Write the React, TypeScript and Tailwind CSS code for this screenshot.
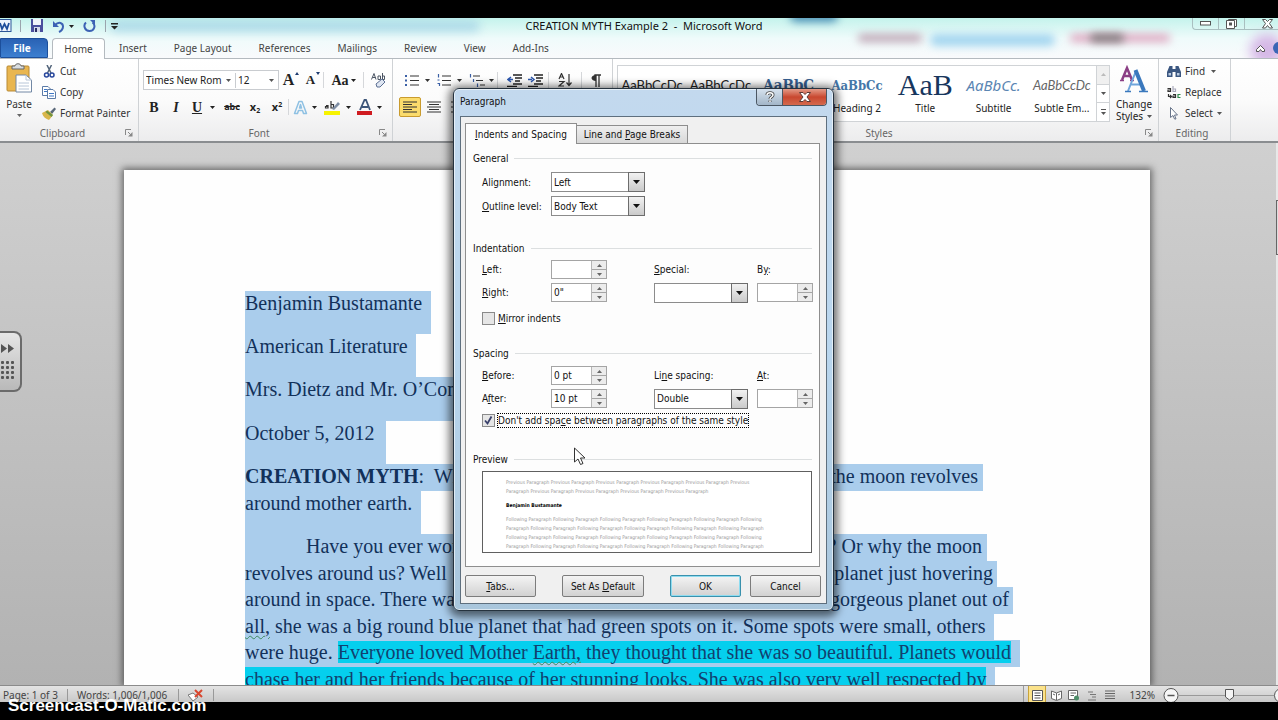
import type { ReactNode } from 'react';
import clsx from 'clsx';

/* ---------- shared bits ---------- */

function Caret({ className }: { className?: string }) {
  return (
    <svg className={clsx('shrink-0', className)} width="5" height="3" viewBox="0 0 5 3" fill="currentColor">
      <path d="M0 0H5L2.5 3Z" />
    </svg>
  );
}

function Divider() {
  return <span className="h-4 w-px shrink-0 bg-[#d5d7da]" />;
}

function Launcher() {
  return (
    <button type="button" aria-label="More options" className="text-[#888]">
      <svg width="8" height="8" viewBox="0 0 8 8" fill="none" stroke="currentColor">
        <path d="M0.5 6V0.5H6M3 3L6 6" />
        <path d="M7.5 3V7.5H3Z" fill="currentColor" stroke="none" />
      </svg>
    </button>
  );
}

function Tool({ label, className, children }: { label: string; className: string; children: ReactNode }) {
  return (
    <button type="button" aria-label={label} className={clsx('flex h-5 shrink-0 items-center justify-center', className)}>
      {children}
    </button>
  );
}

/* ---------- title bar ---------- */

function TitleBar() {
  return (
    <div className="relative flex h-5 items-start overflow-hidden">
      <div className="flex h-4 items-center gap-2 pl-0">
        <svg width="12" height="14" viewBox="0 0 12 14">
          <rect x="-3" y="0.5" width="14" height="12" fill="#eef5fd" stroke="#2b5797" />
          <path d="M0 4L2 10L4.500 5L7 10L9 4" fill="none" stroke="#1f4f9c" strokeWidth="1.800" />
        </svg>
        <span className="h-3 w-px bg-[#9aa4ad]" />
        <div className="flex items-center gap-1.5">
          <Tool label="Save" className="w-4">
            <svg width="14" height="14" viewBox="0 0 14 14">
              <path d="M1 0H13V13H1Z" fill="#4a4f9d" />
              <rect x="3" y="0" width="8" height="6" fill="#f1f3fa" />
              <rect x="4" y="8" width="6" height="5" fill="#d4d8ea" />
              <rect x="5" y="9" width="2" height="4" fill="#2b2f66" />
            </svg>
          </Tool>
          <Tool label="Undo" className="w-6 gap-1">
            <svg width="13" height="13" viewBox="0 0 13 13" fill="none" stroke="#3c62b4" strokeWidth="2">
              <path d="M3 5C7 1 11 3 11 6.500C11 9 9 11 7 12" />
              <path d="M1 1V7H7Z" fill="#3c62b4" stroke="none" />
            </svg>
            <Caret className="text-[#222]" />
          </Tool>
          <Tool label="Redo" className="w-4">
            <svg width="13" height="13" viewBox="0 0 13 13" fill="none" stroke="#3c62b4" strokeWidth="2">
              <path d="M3 2.500C0 5 1.500 11 6.500 11C11.500 11 13 5 9.500 2.500" />
              <path d="M7 0H12V5Z" fill="#3c62b4" stroke="none" />
            </svg>
          </Tool>
        </div>
        <div className="flex items-center gap-0.5">
          <span className="h-3 w-px bg-[#9aa4ad]" />
          <Tool label="Customize Quick Access Toolbar" className="w-3">
            <svg width="7" height="7" viewBox="0 0 7 7">
              <path d="M0 0H7V1.500H0ZM0 3H7L3.500 6.500Z" fill="#222" />
            </svg>
          </Tool>
        </div>
      </div>
      <h1 className="flex-1 pr-6 text-center text-[11px] leading-4 text-[#111]">
        CREATION MYTH Example 2 &nbsp;-&nbsp; Microsoft Word
      </h1>
      <div className="flex h-3 w-[86px] rounded-bl border-b border-l border-[#a9bfc0] text-[#555]">
        <button type="button" aria-label="Minimize" className="flex w-[26px] items-center justify-center border-r border-[#a9bfc0]">
          <svg width="11" height="5" viewBox="0 0 11 5" fill="#fff" stroke="currentColor">
            <rect x="0.500" y="0.500" width="10" height="3.500" />
          </svg>
        </button>
        <button type="button" aria-label="Restore" className="flex w-[26px] items-center justify-center border-r border-[#a9bfc0]">
          <svg width="11" height="10" viewBox="0 0 11 10" fill="#fff" stroke="currentColor">
            <path d="M2.500 0.500H10.500V7.500H2.500Z" />
            <path d="M0.500 1.500H8.500V9.500H0.500Z" />
            <rect x="3.500" y="4" width="2" height="2" />
          </svg>
        </button>
        <button type="button" aria-label="Close" className="flex flex-1 items-center justify-center pl-3">
          <svg width="11" height="10" viewBox="0 0 11 10" fill="#fff" stroke="currentColor">
            <path d="M0.500 0.500H3.500L5.500 2.500L7.500 0.500H10.500L7.500 4.500L10.500 9H7.500L5.500 6.500L3.500 9H0.500L3.500 4.500Z" />
          </svg>
        </button>
      </div>
    </div>
  );
}

const TABS = ['Insert', 'Page Layout', 'References', 'Mailings', 'Review', 'View', 'Add-Ins'];

function RibbonTabs() {
  return (
    <nav className="relative flex h-[21px] items-stretch border-b border-[#b4babf] text-[10px] text-[#444]">
      <button type="button" className="w-12 rounded-tr border border-[#1c4f9b] bg-linear-to-b from-[#2a62b4] to-[#3c7fd0] font-bold text-white">
        <span className="pr-1">File</span>
      </button>
      <button type="button" className="-mb-px ml-1 w-[53px] rounded-t border border-b-0 border-[#b4babf] bg-white">Home</button>
      <div className="flex items-center gap-[27px] pl-[14px]">
        {TABS.map((tab) => (
          <button key={tab} type="button">{tab}</button>
        ))}
      </div>
      <div className="ml-auto flex items-center gap-2">
        <button type="button" aria-label="Minimize the Ribbon">
          <svg width="9" height="7" viewBox="0 0 9 7" fill="#fff" stroke="#555">
            <path d="M0.500 4.500L4.500 0.500L8.500 4.500V6.500H6L4.500 4.500L3 6.500H0.500Z" />
          </svg>
        </button>
        <svg width="5" height="12" viewBox="0 0 5 12">
          <circle cx="6" cy="6" r="6" fill="#3b66b5" />
        </svg>
      </div>
    </nav>
  );
}

/* ---------- ribbon groups ---------- */

function Group({ title, className, launcher = true, children }: { title: string; className: string; launcher?: boolean; children: ReactNode }) {
  return (
    <section className={clsx('flex shrink-0 flex-col border-r border-[#cfd2d5]', className)}>
      <div className="h-[66px]">{children}</div>
      <div className="flex h-4 items-center pr-[5px] text-[#666]">
        <span className="flex-1 text-center">{title}</span>
        {launcher && <Launcher />}
      </div>
    </section>
  );
}

function Clipboard() {
  return (
    <Group title="Clipboard" className="w-[139px]">
      <div className="flex">
        <button type="button" className="flex w-[38px] flex-col items-center pt-1">
          <svg width="27" height="30" viewBox="0 0 27 30">
            <rect x="1" y="3" width="22" height="25" rx="1" fill="#e9b650" stroke="#b98a34" />
            <path d="M6 6V3H9C9 0 15 0 15 3H18V6Z" fill="#d9dde0" stroke="#666" />
            <path d="M10 12H20L25.500 17V29H10Z" fill="#fff" stroke="#7288a5" />
            <path d="M20 12V17H25.500M12.500 20H23M12.500 23H23M12.500 26H23" fill="none" stroke="#b8c6d8" />
          </svg>
          <span className="pt-1 leading-[15px]">Paste</span>
          <Caret className="mt-0.5 text-[#666]" />
        </button>
        <div className="flex flex-col pl-1">
          <button type="button" className="flex h-[21px] items-center gap-1 pt-1">
            <svg width="14" height="13" viewBox="0 0 14 13" fill="none">
              <path d="M5 0L9 8M9.500 0L5.500 8" stroke="#52647a" strokeWidth="1.500" />
              <circle cx="4.500" cy="10" r="2" stroke="#27469c" strokeWidth="1.500" />
              <circle cx="10" cy="10" r="2" stroke="#27469c" strokeWidth="1.500" />
            </svg>
            Cut
          </button>
          <button type="button" className="flex h-[21px] items-center gap-1 pt-1">
            <svg width="14" height="13" viewBox="0 0 14 13" fill="#fff" stroke="#5c7ba6">
              <path d="M0.500 0.500H6L8.500 3V9.500H0.500Z" />
              <path d="M5.500 3.500H11L13.500 6V12.500H5.500Z" />
              <path d="M2 3.500H5M2 5.500H5M7 7.500H12M7 10H12" stroke="#3f77c5" />
            </svg>
            Copy
          </button>
          <button type="button" className="flex h-[21px] items-center gap-1 whitespace-nowrap pt-1">
            <svg width="14" height="13" viewBox="0 0 14 13">
              <path d="M8 5L12.500 0.500L14 2L10 7Z" fill="#596778" />
              <path d="M0 6L6 3L11 8L7 13C4 12 1 10 0 6Z" fill="#d8b64a" />
              <path d="M5 3.500L11 8L9.500 10L3.500 5Z" fill="#6f9440" />
            </svg>
            Format Painter
          </button>
        </div>
      </div>
    </Group>
  );
}

function FontGroup() {
  return (
    <Group title="Font" className="w-[254px]">
      <div className="flex h-8 items-center pl-1 pt-2.5 text-[#222]">
        <div className="flex h-5 items-center border border-[#c9ccd0] bg-white">
          <input aria-label="Font" defaultValue="Times New Rom" className="w-[82px] pl-0.5 outline-none" />
          <Caret className="mr-1 text-[#555]" />
          <input aria-label="Font size" defaultValue="12" className="w-[34px] border-l border-[#c9ccd0] pl-0.5 outline-none" />
          <Caret className="mr-1 text-[#555]" />
        </div>
        <Tool label="Grow Font" className="w-6 gap-px">
          <span className="font-['Liberation_Serif',serif] text-[16px] font-bold">A</span>
          <svg className="self-start" width="4" height="8" viewBox="0 0 4 8"><path d="M0 5L2 2L4 5Z" fill="#1f3c70" /></svg>
        </Tool>
        <Tool label="Shrink Font" className="w-5 gap-px">
          <span className="font-['Liberation_Serif',serif] text-[13px] font-bold">A</span>
          <svg className="self-start" width="4" height="8" viewBox="0 0 4 8"><path d="M0 2H4L2 5Z" fill="#1f3c70" /></svg>
        </Tool>
        <Divider />
        <Tool label="Change Case" className="w-[39px] gap-0.5">
          <span className="font-['Liberation_Serif',serif] text-[14px] font-bold">Aa</span>
          <Caret />
        </Tool>
        <Divider />
        <Tool label="Clear Formatting" className="w-7">
          <svg width="16" height="16" viewBox="0 0 16 16" fill="none" stroke="#4b5563">
            <path d="M1.500 7.500L4 1.500L6 7.500M2.500 5.500H5.500M8 4V7.500H10.500V4H8M12.500 1V7.500H14.500V4H12.500" />
            <path d="M6 12L12 7L15 10L10 15H7Z" fill="#dfe6f2" stroke="#5b6f92" />
          </svg>
        </Tool>
      </div>
      <div className="flex h-8 items-center pl-1 text-[#222]">
        <Tool label="Bold" className="w-[22px]"><span className="font-['Liberation_Serif',serif] text-[14px] font-bold">B</span></Tool>
        <Tool label="Italic" className="w-[22px]"><span className="font-['Liberation_Serif',serif] text-[14px] font-bold italic">I</span></Tool>
        <Tool label="Underline" className="w-[33px] gap-2">
          <span className="font-['Liberation_Serif',serif] text-[14px] font-bold underline">U</span>
          <Caret />
        </Tool>
        <Tool label="Strikethrough" className="w-6"><span className="text-[9px] font-bold line-through">abc</span></Tool>
        <Tool label="Subscript" className="w-[22px]"><span className="text-[11px] font-bold">x<sub className="text-[7px]">2</sub></span></Tool>
        <Tool label="Superscript" className="w-[22px]"><span className="text-[11px] font-bold">x<sup className="text-[7px]">2</sup></span></Tool>
        <Divider />
        <Tool label="Text Effects" className="w-8 gap-1">
          <svg width="15" height="15" viewBox="0 0 15 15" fill="none" strokeLinejoin="round">
            <path d="M1.500 13.500L6 1.500H9L13.500 13.500H10.500L9.500 10.500H5.500L4.500 13.500ZM6.500 8H8.500L7.500 4.500Z" stroke="#8fc1e3" strokeWidth="1.500" />
          </svg>
          <Caret />
        </Tool>
        <Tool label="Text Highlight Color" className="w-8 gap-[5px]">
          <svg width="17" height="16" viewBox="0 0 17 16">
            <path d="M2 6.500H4V9H1.500V7.500H4M7 2V9H9.500V5.500H7" fill="none" stroke="#333" strokeWidth="1.200" />
            <path d="M8 10L14 3L16 5L10 11Z" fill="#7d8da3" />
            <rect y="12" width="16" height="4" fill="#f7f300" />
          </svg>
          <Caret />
        </Tool>
        <Tool label="Font Color" className="w-8 gap-1">
          <svg width="16" height="16" viewBox="0 0 16 16">
            <path d="M3 11L7.500 1H9L13 11M5 8H11" fill="none" stroke="#3d5578" strokeWidth="1.800" />
            <rect y="12" width="15" height="4" fill="#cf1b20" />
          </svg>
          <Caret />
        </Tool>
      </div>
    </Group>
  );
}

function ParagraphGroup() {
  return (
    <Group title="Paragraph" className="w-[220px]">
      <div className="flex h-8 items-center pl-2 pt-2.5 text-[#333]">
        <Tool label="Bullets" className="w-8 gap-1.5">
          <svg width="14" height="13" viewBox="0 0 14 13" stroke="#333" strokeWidth="1.200">
            <path d="M5 2H14M5 6.500H14M5 11H14" />
            <path d="M0 2H2M0 6.500H2M0 11H2" stroke="#3a5fa5" strokeWidth="2" />
          </svg>
          <Caret />
        </Tool>
        <Tool label="Numbering" className="w-8 gap-1.5">
          <svg width="14" height="13" viewBox="0 0 14 13" stroke="#333" strokeWidth="1.200">
            <path d="M5 2H14M5 6.500H14M5 11H14" />
            <path d="M1.500 0V3.500M0.500 6H2.500M0.500 9.500H2.500V12" stroke="#3a5fa5" fill="none" />
          </svg>
          <Caret />
        </Tool>
        <Tool label="Multilevel List" className="w-8 gap-1">
          <svg width="16" height="13" viewBox="0 0 16 13" stroke="#333" strokeWidth="1.200">
            <path d="M4 2H11M7 6.500H14M11 11H16" />
            <path d="M1.500 0V3.500M4.500 5V8M8.500 9.500V13" stroke="#3a5fa5" />
          </svg>
          <Caret />
        </Tool>
        <Divider />
        <Tool label="Decrease Indent" className="w-[25px] pl-2">
          <svg width="15" height="13" viewBox="0 0 15 13" stroke="#222" strokeWidth="1.500">
            <path d="M6 1H15M8 4H15M8 7H13M6 10H15M0 12.500H10" />
            <path d="M6 5.500H2M4 3L1 5.500L4 8" fill="none" stroke="#2c57ad" />
          </svg>
        </Tool>
        <Tool label="Increase Indent" className="w-[25px]">
          <svg width="15" height="13" viewBox="0 0 15 13" stroke="#222" strokeWidth="1.500">
            <path d="M6 1H15M8 4H15M8 7H13M6 10H15M0 12.500H10" />
            <path d="M0 5.500H4M3 3L6 5.500L3 8" fill="none" stroke="#2c57ad" />
          </svg>
        </Tool>
        <Divider />
        <Tool label="Sort" className="w-8">
          <svg width="14" height="14" viewBox="0 0 14 14" fill="none" stroke="#333" strokeWidth="1.200">
            <path d="M1 6L3.500 0.500L6 6M2 4H5M1 8.500H6L1 13H6M11 1V12M8.500 9.500L11 12.500L13.500 9.500" />
          </svg>
        </Tool>
        <Divider />
        <Tool label="Show Paragraph Marks" className="w-7">
          <svg width="10" height="13" viewBox="0 0 10 13" fill="none" stroke="#333" strokeWidth="1.300">
            <path d="M10 1H4V6M5 1V13M8 1V13" />
            <path d="M5 1C-1 1 -1 7 5 7Z" fill="#333" stroke="none" />
          </svg>
        </Tool>
      </div>
      <div className="flex h-8 items-center gap-0.5 pl-1.5">
        <Tool label="Align Left" className="w-[22px] rounded-xs border border-[#c99b2e] bg-[#fbdc6c]">
          <svg width="14" height="13" viewBox="0 0 14 13" stroke="#333" strokeWidth="1.200">
            <path d="M0 1H14M0 3.500H9M0 6H14M0 8.500H9M0 11H14" />
          </svg>
        </Tool>
        <Tool label="Center" className="w-[22px]">
          <svg width="14" height="13" viewBox="0 0 14 13" stroke="#333" strokeWidth="1.200">
            <path d="M0 1H14M2 3.500H12M0 6H14M2 8.500H12M0 11H14" />
          </svg>
        </Tool>
        <Tool label="Align Right" className="w-[22px]">
          <svg width="14" height="13" viewBox="0 0 14 13" stroke="#333" strokeWidth="1.200">
            <path d="M0 1H14M5 3.500H14M0 6H14M5 8.500H14M0 11H14" />
          </svg>
        </Tool>
      </div>
    </Group>
  );
}

const STYLES = [
  { name: 'Normal', sample: 'AaBbCcDc', look: "font-['Lato',sans-serif] text-[13px] text-[#222]" },
  { name: 'No Spacing', sample: 'AaBbCcDc', look: "font-['Lato',sans-serif] text-[13px] text-[#222]" },
  { name: 'Heading 1', sample: 'AaBbC', look: "font-['DejaVu_Serif_Condensed','DejaVu_Serif',serif] text-[15px] font-bold text-[#365f91]" },
  { name: 'Heading 2', sample: 'AaBbCc', look: "font-['DejaVu_Serif_Condensed','DejaVu_Serif',serif] text-[13px] font-bold text-[#4577a8]" },
  { name: 'Title', sample: 'AaB', look: "font-['Liberation_Serif',serif] text-[30px] text-[#17365d]" },
  { name: 'Subtitle', sample: 'AaBbCc.', look: "font-['Noto_Sans',sans-serif] text-[15px] italic text-[#5b86b3]" },
  { name: 'Subtle Em...', sample: 'AaBbCcDc', look: "font-['Lato',sans-serif] text-[13px] italic text-[#666]" },
];

function StylesGroup() {
  return (
    <Group title="Styles" className="min-w-0 flex-1">
      <div className="flex pl-1 pt-1.5 text-[#222]">
        <div className="flex h-[57px] min-w-0 flex-1 border border-[#d0d3d6] bg-white">
          <div className="grid min-w-0 flex-1 grid-cols-7">
            {STYLES.map((s) => (
              <button key={s.name} type="button" className="flex min-w-0 flex-col items-center overflow-hidden whitespace-nowrap">
                <span className={clsx('flex h-[34px] items-center pt-1 leading-none', s.look)}>{s.sample}</span>
                <span className="leading-4">{s.name}</span>
              </button>
            ))}
          </div>
          <div className="flex w-[13px] flex-col border-l border-[#d0d3d6] text-[#555]">
            <button type="button" aria-label="Previous styles" className="flex flex-1 items-center justify-center bg-[#f0f0f0] text-[#bbb]"><Caret className="rotate-180" /></button>
            <button type="button" aria-label="Next styles" className="flex flex-1 items-center justify-center border-y border-[#d0d3d6]"><Caret /></button>
            <button type="button" aria-label="More styles" className="flex flex-1 flex-col items-center justify-center gap-0.5">
              <span className="h-px w-[5px] bg-[#555]" />
              <Caret />
            </button>
          </div>
        </div>
        <button type="button" className="flex w-12 flex-col items-center">
          <svg width="28" height="29" viewBox="0 0 28 29" fill="none">
            <path d="M2 15L7 3L12 15M4 11H10" stroke="#8b3f85" strokeWidth="2.500" />
            <path d="M0 15.500H4M10 15.500H14" stroke="#8b3f85" strokeWidth="1.500" />
            <path d="M8 26L16 6M10.500 19.500H20" stroke="#6fa5db" strokeWidth="2" />
            <path d="M15.500 5L24 26" stroke="#3a78bd" strokeWidth="4" />
            <path d="M5 26.500H11M19 26.500H28" stroke="#3a78bd" strokeWidth="1.500" />
          </svg>
          <span className="pt-1 leading-3">Change</span>
          <span className="flex items-center gap-1 leading-3">Styles <Caret className="text-[#555]" /></span>
        </button>
      </div>
    </Group>
  );
}

function EditingGroup() {
  return (
    <Group title="Editing" className="w-[72px]" launcher={false}>
      <div className="flex flex-col items-start pl-2">
        <button type="button" className="flex h-[21px] items-center gap-1 pt-1">
          <svg width="14" height="13" viewBox="0 0 14 13">
            <path d="M0 12V7L2.500 1H5.500V4H8.500V1H11.500L14 7V12H8.500V7H5.500V12Z" fill="#3a5680" />
            <path d="M1.500 8H4V10.500H1.500ZM10 8H12.500V10.500H10Z" fill="#b9cbe2" />
          </svg>
          Find <Caret className="ml-0.5 text-[#555]" />
        </button>
        <button type="button" className="flex h-[21px] items-center gap-1 pt-1">
          <svg width="14" height="13" viewBox="0 0 14 13" fill="none" stroke="#333" strokeWidth="1.200">
            <path d="M0.500 2.500H3.500V5.500H1V4H3.500M1.500 8V10.500H4M3 9L4.500 10.500L3 12M6 8.500H8.500V11.500H6V10H8.500" />
            <path d="M6 0V5.500H8.500V3H6" stroke="#aab" />
            <path d="M13.500 8.500H11V11.500H13.500" stroke="#2f8a4b" />
          </svg>
          Replace
        </button>
        <button type="button" className="flex h-[21px] items-center gap-1 pt-1">
          <svg width="14" height="13" viewBox="0 0 14 13" fill="#fff" stroke="#68758a">
            <path d="M3.500 0.500V10.500L6 8.500L7.500 12H9L7.500 8H10.500Z" />
          </svg>
          Select <Caret className="text-[#555]" />
        </button>
      </div>
    </Group>
  );
}

/* ---------- document ---------- */

const squiggle = 'underline decoration-[#3c8a5c] decoration-wavy decoration-1 underline-offset-2';

function Line({ end, className, children }: { end: string; className?: string; children: ReactNode }) {
  return (
    <div className={clsx('flex justify-between whitespace-pre bg-[#aacdec]', end, className)}>{children}</div>
  );
}

function DocumentPage() {
  return (
    <article className="h-full w-[1026px] shrink-0 bg-[#fefefe] px-[121px] pt-[121px] font-['Liberation_Serif',serif] text-[20px] leading-6 text-[#12315a] shadow-[0_0_7px_2px_rgba(0,0,0,0.5)]">
      <Line end="w-[186px]" className="h-[43px]">Benjamin Bustamante</Line>
      <Line end="w-[171px]" className="h-[43px]">American Literature</Line>
      <Line end="w-[260px]" className="h-11">Mrs. Dietz and Mr. O’Connor</Line>
      <Line end="w-[141px]" className="h-[43px]">October 5, 2012</Line>
      <Line end="w-[738px]" className="h-[27px] pr-[5px]">
        <span><strong>CREATION MYTH</strong>:  Why</span>
        <span>the moon revolves</span>
      </Line>
      <Line end="w-[176px]" className="h-[43px]">around mother earth.</Line>
      <div className="[&>*:nth-child(even)]:h-[26px] [&>*:nth-child(odd)]:h-[27px]">
        <Line end="w-[742px]" className="pl-[61px] pr-[5px]">
          <span>Have you ever wond</span>
          <span>? Or why the moon</span>
        </Line>
        <Line end="w-[752px]" className="pr-1">
          <span>revolves around us? Well</span>
          <span>planet just hovering</span>
        </Line>
        <Line end="w-[768px]" className="pr-1">
          <span>around in space. There was</span>
          <span>gorgeous planet out of</span>
        </Line>
        <Line end="w-[749px]">
          <span><span className={squiggle}>all,</span> she was a big round blue planet that had green spots on it. Some spots were small, others</span>
        </Line>
        <Line end="w-[775px]">
          <span>were huge. <mark className="bg-[#05cfee] text-[#12416f]">Everyone loved Mother <span className={squiggle}>Earth,</span> they thought that she was so beautiful. Planets would</mark></span>
        </Line>
        <Line end="w-[750px]">
          <mark className="bg-[#05cfee] text-[#12416f]">chase her and her friends because of her stunning looks. She was also very well respected by</mark>
        </Line>
      </div>
    </article>
  );
}

function SideHandle() {
  return (
    <button type="button" aria-label="Open side panel" className="absolute left-0 top-[188px] flex h-[61px] w-[22px] flex-col items-start justify-center gap-2 rounded-r-lg border-2 border-l-0 border-[#6b6b6b] bg-linear-to-b from-[#e6e6e6] to-[#b9b9b9]">
      <svg width="14" height="9" viewBox="0 0 14 9" fill="#555">
        <path d="M1 0L7 4.500L1 9ZM8 0L14 4.500L8 9Z" />
      </svg>
      <svg width="14" height="18" viewBox="0 0 14 18" fill="#555">
        {[0, 5, 10, 15].map((y) => [1, 6, 11].map((x) => <rect key={`${x}-${y}`} x={x} y={y} width="3" height="3" rx="1" />))}
      </svg>
    </button>
  );
}

/* ---------- status bar ---------- */

function StatusBar() {
  return (
    <footer className="flex h-[17px] shrink-0 items-center overflow-hidden border-t border-[#8b8b8b] bg-linear-to-b from-[#e4e4e4] to-[#c8c8c8] pl-[3px] pt-0.5 text-[10px] text-[#444]">
      <span className="w-[65px] border-r border-[#999] leading-3">Page: 1 of 3</span>
      <span className="w-[111px] border-r border-[#999] pl-[9px] leading-3">Words: 1,006/1,006</span>
      <span className="flex w-[35px] justify-center border-r border-[#999]">
        <svg width="16" height="12" viewBox="0 0 16 12">
          <path d="M0 6L5 4L10 8L5 12Z" fill="#fff" stroke="#777" />
          <path d="M7 1L14 8M14 1L7 8" stroke="#d9472f" strokeWidth="2" />
        </svg>
      </span>
      <div className="ml-auto flex items-center">
        <div className="flex items-center gap-0.5 border-l border-[#999] pl-1">
          <Tool label="Print Layout" className="h-4 w-[18px] border border-[#c9a43a] bg-[#fbe28a]">
            <svg width="11" height="11" viewBox="0 0 11 11" fill="#fff" stroke="#555"><path d="M0.500 0.500H10.500V10.500H0.500ZM2.500 3H8.500M2.500 5.500H8.500M2.500 8H8.500" /></svg>
          </Tool>
          <Tool label="Full Screen Reading" className="h-4 w-4">
            <svg width="11" height="11" viewBox="0 0 11 11" fill="#fff" stroke="#666"><path d="M0.500 1L5.500 3L10.500 1V8.500L5.500 10.500L0.500 8.500ZM5.500 3V10M2 4L4 5M7 5L9 4" /></svg>
          </Tool>
          <Tool label="Web Layout" className="h-4 w-4">
            <svg width="12" height="11" viewBox="0 0 12 11" fill="#fff" stroke="#666"><path d="M0.500 0.500H9.500V9.500H0.500ZM2.500 3H8M2.500 5.500H6" /><circle cx="8.500" cy="8" r="2.500" fill="#4d8d68" stroke="none" /></svg>
          </Tool>
          <Tool label="Outline" className="h-4 w-4">
            <svg width="10" height="11" viewBox="0 0 10 11" fill="none" stroke="#777"><path d="M1 2H6M3 4.500H9M5 7H9M1 10H9" /></svg>
          </Tool>
          <Tool label="Draft" className="h-4 w-4">
            <svg width="10" height="10" viewBox="0 0 10 10" fill="none" stroke="#666"><path d="M0 1H10M0 3.500H10M0 6H10M0 8.500H10" /></svg>
          </Tool>
        </div>
        <span className="w-[45px] pr-2 text-right leading-3">132%</span>
        <button type="button" aria-label="Zoom out">
          <svg width="16" height="15" viewBox="0 0 16 15" fill="#f6f6f6" stroke="#555"><circle cx="8" cy="7.500" r="7" /><path d="M4.500 7.500H11.500" strokeWidth="1.500" /></svg>
        </button>
        <div className="flex h-4 w-[95px] items-center">
          <span className="h-px w-[46px] bg-[#999]" />
          <svg width="9" height="12" viewBox="0 0 9 12" fill="#f4f4f4" stroke="#555"><path d="M0.500 0.500H8.500V8L4.500 11L0.500 8Z" /></svg>
          <span className="h-px flex-1 bg-[#999]" />
        </div>
        <svg width="4" height="15" viewBox="0 0 4 15" fill="#f6f6f6" stroke="#555"><circle cx="7.500" cy="7.500" r="7" /></svg>
      </div>
    </footer>
  );
}

/* ---------- paragraph dialog ---------- */

// Underlines the access key inside a label
function Key({ text }: { text: string }) {
  const [before, key, after] = text.split('|');
  return <>{before}<span className="underline underline-offset-1">{key}</span>{after}</>;
}

function Heading({ children, className }: { children: ReactNode; className?: string }) {
  return (
    <h2 className={clsx('flex h-4 items-center gap-1.5', className)}>
      {children}
      <span className="h-px flex-1 bg-[#dcdfe0]" />
    </h2>
  );
}

function Select({ id, value }: { id: string; value: string }) {
  return (
    <div className="relative h-5 w-[94px] border border-[#8c8c8c] bg-white">
      <select id={id} className="block h-full w-full appearance-none bg-transparent pl-0.5 pr-4 outline-none">
        <option>{value}</option>
      </select>
      <span className="pointer-events-none absolute -right-px -top-px flex h-5 w-[17px] items-center justify-center border border-[#6d6d6d] bg-linear-to-b from-[#f2f2f2] to-[#cacaca]">
        <svg width="7" height="4" viewBox="0 0 7 4"><path d="M0 0H7L3.500 4Z" fill="#111" /></svg>
      </span>
    </div>
  );
}

function Spinner({ id, value, label }: { id: string; value: string; label: string }) {
  return (
    <div className="flex h-[19px] w-14 border border-[#a5a5a5] bg-white">
      <input id={id} defaultValue={value} className="w-10 min-w-0 flex-1 pl-0.5 outline-none" />
      <div className="flex w-[15px] flex-col border-l border-[#b5b5b5] bg-[#ececec] text-[#666]">
        <button type="button" aria-label={`Increase ${label}`} className="flex flex-1 items-center justify-center border-b border-[#a5a5a5]"><Caret className="rotate-180" /></button>
        <button type="button" aria-label={`Decrease ${label}`} className="flex flex-1 items-center justify-center"><Caret /></button>
      </div>
    </div>
  );
}

const row = 'grid grid-cols-[69px_103px_103px_55px] items-center pl-[9px]';
const dialogButton = 'h-[22px] rounded-xs border bg-linear-to-b from-[#f4f4f4] to-[#d2d2d2]';

function Preview() {
  return (
    <div className="ml-[9px] mt-1 h-[82px] overflow-hidden whitespace-nowrap border border-[#5f5f5f] bg-white pl-[23px] pt-1.5 text-[5px] leading-[9px] text-[#9a9a9a]">
      <p>Previous Paragraph Previous Paragraph Previous Paragraph Previous Paragraph Previous Paragraph Previous</p>
      <p>Paragraph Previous Paragraph Previous Paragraph Previous Paragraph Previous Paragraph</p>
      <p className="my-[5px] font-bold text-black">Benjamin Bustamante</p>
      <p>Following Paragraph Following Paragraph Following Paragraph Following Paragraph Following Paragraph Following</p>
      <p>Paragraph Following Paragraph Following Paragraph Following Paragraph Following Paragraph Following Paragraph</p>
      <p>Following Paragraph Following Paragraph Following Paragraph Following Paragraph Following Paragraph Following</p>
      <p>Paragraph Following Paragraph Following Paragraph Following Paragraph Following Paragraph Following Paragraph</p>
    </div>
  );
}

function ParagraphDialog() {
  return (
    <div
      role="dialog"
      aria-label="Paragraph"
      className="absolute left-[453px] top-[88px] w-[381px] rounded-md border border-[#26333f] bg-linear-to-b from-[#c3d9ee] via-[#b9d6ee] to-[#a9c6dc] px-1.5 pb-1.5 font-['DejaVu_Sans_Condensed','DejaVu_Sans',sans-serif] text-[10px] text-[#111] shadow-[0_2px_9px_4px_rgba(0,0,0,0.55),inset_0_0_0_1px_rgba(255,255,255,0.6)]"
    >
      <div className="flex h-[27px] items-start justify-between">
        <span className="pt-1 leading-[18px]">Paragraph</span>
        <div className="flex h-[17px] overflow-hidden rounded-b border border-t-0 border-[#4b5763]">
          <button type="button" aria-label="Help" className="flex w-[26px] items-center justify-center border-r border-[#4b5763] bg-linear-to-b from-[#d6e2ee] to-[#a3b6c8]">
            <svg width="10" height="12" viewBox="0 0 10 12" fill="none">
              <path d="M2 4C2 1 8 1 8 4C8 6 5 6 5 8M5 9.500V11" stroke="#444" strokeWidth="3" />
              <path d="M2 4C2 1 8 1 8 4C8 6 5 6 5 8M5 9.500V11" stroke="#fff" strokeWidth="1.500" />
            </svg>
          </button>
          <button type="button" aria-label="Close" className="flex w-[43px] items-center justify-center bg-linear-to-b from-[#e29a88] via-[#c8472f] to-[#d4694d]">
            <svg width="12" height="10" viewBox="0 0 12 10" fill="#fff" stroke="#5b3a35">
              <path d="M0.500 0.500H4L6 2.500L8 0.500H11.500L8 5L11.500 9.500H8L6 7.500L4 9.500H0.500L4 5Z" />
            </svg>
          </button>
        </div>
      </div>

      <div className="border border-[#5e6f7e] bg-[#f0f0f0] px-1 pb-1.5 pt-1.5">
        <div role="tablist" className="flex items-end">
          <button type="button" role="tab" aria-selected="true" className="relative -mb-px h-[21px] w-28 border border-b-0 border-[#8e8e8e] bg-[#fdfdfd]">
            <Key text="|I|ndents and Spacing" />
          </button>
          <button type="button" role="tab" aria-selected="false" className="h-[18px] w-[111px] border border-b-0 border-l-0 border-[#8e8e8e] bg-linear-to-b from-[#efefef] to-[#d8d8d8]">
            <Key text="Line and |P|age Breaks" />
          </button>
        </div>

        <div role="tabpanel" className="h-[424px] w-[355px] border border-[#8e8e8e] bg-[#fdfdfd] pl-[7px] pr-[7px] pt-1.5">
          <Heading>General</Heading>
          <div className={clsx(row, 'mt-1 h-6')}>
            <label htmlFor="alignment"><Key text="Ali|g|nment:" /></label>
            <Select id="alignment" value="Left" />
          </div>
          <div className={clsx(row, 'h-6')}>
            <label htmlFor="outline"><Key text="|O|utline level:" /></label>
            <Select id="outline" value="Body Text" />
          </div>

          <Heading className="mt-[22px]">Indentation</Heading>
          <div className={clsx(row, 'mt-0.5 h-[23px]')}>
            <label htmlFor="left"><Key text="|L|eft:" /></label>
            <Spinner id="left" value="" label="left indent" />
            <label htmlFor="special"><Key text="|S|pecial:" /></label>
            <label htmlFor="by"><Key text="B|y|:" /></label>
          </div>
          <div className={clsx(row, 'h-[23px]')}>
            <label htmlFor="right"><Key text="|R|ight:" /></label>
            <Spinner id="right" value={'0"'} label="right indent" />
            <Select id="special" value="" />
            <Spinner id="by" value="" label="special indent" />
          </div>
          <label className="mt-1 flex h-5 items-center gap-[3px] pl-[9px]">
            <input type="checkbox" className="h-[13px] w-[13px] appearance-none border border-[#8a8a8a] bg-[#e6e6e6]" />
            <span><Key text="|M|irror indents" /></span>
          </label>

          <Heading className="mt-[17px]">Spacing</Heading>
          <div className={clsx(row, 'mt-[3px] h-[23px]')}>
            <label htmlFor="before"><Key text="|B|efore:" /></label>
            <Spinner id="before" value="0 pt" label="space before" />
            <label htmlFor="line"><Key text="Li|n|e spacing:" /></label>
            <label htmlFor="at"><Key text="|A|t:" /></label>
          </div>
          <div className={clsx(row, 'h-[23px]')}>
            <label htmlFor="after"><Key text="A|f|ter:" /></label>
            <Spinner id="after" value="10 pt" label="space after" />
            <Select id="line" value="Double" />
            <Spinner id="at" value="" label="line spacing" />
          </div>
          <label className="flex h-5 items-center gap-0.5 pl-[9px]">
            <span className="relative flex h-[13px] w-[13px] shrink-0">
              <input type="checkbox" defaultChecked className="h-[13px] w-[13px] appearance-none border border-[#8a8a8a] bg-[#e6e6e6]" />
              <svg className="pointer-events-none absolute left-0 top-0" width="13" height="13" viewBox="0 0 13 13" fill="none" stroke="#39406b" strokeWidth="1.800">
                <path d="M3 6.500L5.500 9.500L9.500 2.500" />
              </svg>
            </span>
            <span className="whitespace-nowrap border border-dotted border-black leading-[13px]"><Key text="Don't add spa|c|e between paragraphs of the same style" /></span>
          </label>

          <Heading className="mt-[21px]">Preview</Heading>
          <Preview />
        </div>

        <div className="flex pt-2">
          <button type="button" className={clsx(dialogButton, 'w-[71px] border-[#7c7c7c]')}><Key text="|T|abs..." /></button>
          <button type="button" className={clsx(dialogButton, 'ml-[26px] w-[82px] border-[#7c7c7c]')}><Key text="Set As |D|efault" /></button>
          <button type="button" className={clsx(dialogButton, 'ml-[26px] w-[71px] border-[#3a91ad] shadow-[inset_0_0_0_1px_#8edcf0]')}>OK</button>
          <button type="button" className={clsx(dialogButton, 'ml-[9px] w-[71px] border-[#7c7c7c]')}>Cancel</button>
        </div>
      </div>
    </div>
  );
}

export default function App() {
  return (
    <div className="relative flex h-screen flex-col overflow-hidden bg-black pb-[18px] pt-[18px] font-['Noto_Sans','Open_Sans',sans-serif]">
      <header className="relative shrink-0 overflow-hidden bg-linear-to-b from-[#c4f3ec] via-[#effbfb] to-[#fafafc]">
        {/* glass showing what lies behind the window */}
        <div aria-hidden="true" className="absolute inset-0">
          <div className="absolute left-[110px] top-0.5 h-3 w-[370px] rounded-full bg-[#9fd0e6]/70 blur-[5px]" />
          <div className="absolute left-[790px] -top-2 h-3 w-12 rounded-full bg-[#4a8fb5] blur-[4px]" />
          <div className="absolute left-[858px] top-4 h-2 w-[64px] rounded-full bg-[#bfa4b4] blur-[4px]" />
          <div className="absolute left-[930px] top-4 h-3 w-[125px] rounded-full bg-[#a3d5ef] blur-[4px]" />
          <div className="absolute left-[1070px] top-4 h-2 w-[100px] rounded-full bg-[#dfa6c0] blur-[4px]" />
          <div className="absolute left-[1090px] top-4 h-2 w-[34px] rounded-full bg-[#777] blur-[4px]" />
          <div className="absolute left-[1250px] top-4 h-8 w-[34px] rounded-full bg-[#d5b8e6] blur-[6px]" />
        </div>
        <TitleBar />
        <RibbonTabs />
      </header>
      <div className="relative flex h-[84px] shrink-0 border-b-2 border-[#8a8d90] bg-linear-to-b from-white via-[#fbfbfb] to-[#ececed] text-[10px] text-[#333]">
        <Clipboard />
        <FontGroup />
        <ParagraphGroup />
        <StylesGroup />
        <EditingGroup />
        <div className="w-[47px] shrink-0" />
      </div>
      <main className="relative flex min-h-0 flex-1 overflow-hidden bg-linear-to-b from-[#d0d0d0] to-[#b2b2b2]">
        <div className="flex min-w-0 flex-1 justify-center overflow-hidden pr-0.5 pt-[27px]">
          <DocumentPage />
        </div>
        <div className="w-0.5 bg-[#e8e8e8] pt-[57px]">
          <div className="h-[55px] border-y border-l border-[#666] bg-[#ddd]" />
        </div>
        <SideHandle />
      </main>
      <StatusBar />
      <ParagraphDialog />
      <svg aria-hidden="true" className="absolute left-[574px] top-[447px]" width="12" height="19" viewBox="0 0 12 19" fill="#fff" stroke="#333">
        <path d="M0.500 1V15L4 12L6.500 17.500L9 16.500L6.500 11H11Z" />
      </svg>
      <p className="absolute bottom-1 left-2 font-['Liberation_Sans',sans-serif] text-[17px] font-bold leading-5 text-white">Screencast-O-Matic.com</p>
    </div>
  );
}
